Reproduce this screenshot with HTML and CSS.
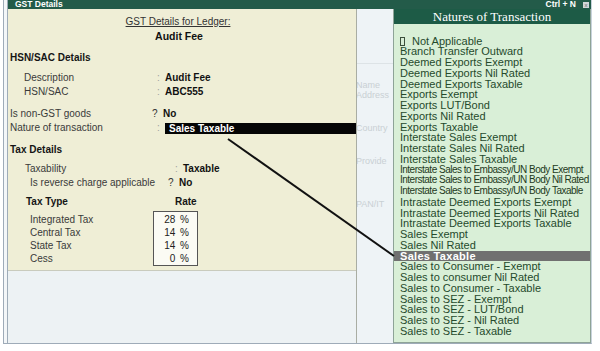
FILE: index.html
```html
<!DOCTYPE html>
<html>
<head>
<meta charset="utf-8">
<title>GST Details</title>
<link rel="stylesheet" href="styles.css">
</head>
<body>
<div class="frame">
  <div class="inner">
    <div class="titlebar">
      <span class="tb-title">GST Details</span>
      <span class="tb-right"><span class="shortcut">Ctrl + N</span><span class="closebox">x</span></span>
    </div>
    <div class="main">
      <div class="leftcol">
        <div class="ledger">
          <div class="title">GST Details for Ledger:</div>
          <div class="subject">Audit Fee</div>

          <div class="heading">HSN/SAC Details</div>
          <div class="row row-desc"><span class="lbl w-desc">Description</span><span class="colon">:</span><span class="val">Audit Fee</span></div>
          <div class="row row-desc2"><span class="lbl w-desc">HSN/SAC</span><span class="colon">:</span><span class="val">ABC555</span></div>

          <div class="row row-nongst"><span class="lbl w-nongst">Is non-GST goods</span><span class="q">?</span><span class="val">No</span></div>
          <div class="row row-nature"><span class="lbl w-nature">Nature of transaction</span><span class="colon">:</span><span class="selbar">Sales Taxable</span></div>

          <div class="heading heading-tax">Tax Details</div>
          <div class="row row-taxability"><span class="lbl w-taxability">Taxability</span><span class="colon">:</span><span class="val">Taxable</span></div>
          <div class="row row-reverse"><span class="lbl w-reverse">Is reverse charge applicable</span><span class="q">?</span><span class="val">No</span></div>

          <div class="row row-taxhead"><span class="th w-taxhead">Tax Type</span><span class="th">Rate</span></div>
          <div class="taxtable">
            <div class="taxlabels">
              <div class="trow">Integrated Tax</div>
              <div class="trow">Central Tax</div>
              <div class="trow">State Tax</div>
              <div class="trow">Cess</div>
            </div>
            <div class="ratebox">
              <div class="trow rate">28 %</div>
              <div class="trow rate">14 %</div>
              <div class="trow rate">14 %</div>
              <div class="trow rate">0 %</div>
            </div>
          </div>
        </div>
        <div class="lower"></div>
      </div>

      <div class="midcol">
        <div class="mid-top"></div>
        <div class="ghost g-name">Name</div>
        <div class="ghost">Address</div>
        <div class="ghost g-country">Country</div>
        <div class="ghost g-provide">Provide</div>
        <div class="ghost g-pan">PAN/IT</div>
      </div>

      <div class="nature">
        <div class="nature-head">Natures of Transaction</div>
        <ul class="nlist">
          <li><span class="na-box"></span>Not Applicable</li>
          <li>Branch Transfer Outward</li>
          <li>Deemed Exports Exempt</li>
          <li>Deemed Exports Nil Rated</li>
          <li>Deemed Exports Taxable</li>
          <li>Exports Exempt</li>
          <li>Exports LUT/Bond</li>
          <li>Exports Nil Rated</li>
          <li>Exports Taxable</li>
          <li>Interstate Sales Exempt</li>
          <li>Interstate Sales Nil Rated</li>
          <li>Interstate Sales Taxable</li>
          <li class="narrow">Interstate Sales to Embassy/UN Body Exempt</li>
          <li class="narrow">Interstate Sales to Embassy/UN Body Nil Rated</li>
          <li class="narrow">Interstate Sales to Embassy/UN Body Taxable</li>
          <li>Intrastate Deemed Exports Exempt</li>
          <li>Intrastate Deemed Exports Nil Rated</li>
          <li>Intrastate Deemed Exports Taxable</li>
          <li>Sales Exempt</li>
          <li>Sales Nil Rated</li>
          <li class="selected">Sales Taxable</li>
          <li>Sales to Consumer - Exempt</li>
          <li>Sales to consumer Nil Rated</li>
          <li>Sales to Consumer - Taxable</li>
          <li>Sales to SEZ - Exempt</li>
          <li>Sales to SEZ - LUT/Bond</li>
          <li>Sales to SEZ - Nil Rated</li>
          <li>Sales to SEZ - Taxable</li>
        </ul>
      </div>
    </div>
  </div>
</div>
<svg class="pointer" width="600" height="351" viewBox="0 0 600 351">
  <line x1="228" y1="139" x2="394" y2="256" stroke="#111" stroke-width="2"/>
</svg>
</body>
</html>
```
FILE: styles.css
```css
html, body {
  margin: 0;
  padding: 0;
}
body {
  width: 600px;
  height: 351px;
  overflow: hidden;
  background: #ffffff;
  font-family: "Liberation Sans", Arial, sans-serif;
  position: relative;
}
.frame {
  margin-left: 3px;
  width: 589px;
  height: 344px;
  box-sizing: border-box;
  border-left: 1px solid #9eabb8;
  border-bottom: 1px solid #9eabb8;
  border-right: 1px solid #c8d3dc;
  padding-left: 3px;
  background: #f3f6f8;
  display: flex;
}
.inner {
  flex: 1;
  border-left: 1px solid #9eabb8;
  display: flex;
  flex-direction: column;
  min-width: 0;
}
.titlebar {
  height: 9px;
  background: #235b49;
  color: #fff;
  display: flex;
  align-items: center;
  justify-content: space-between;
  padding: 0 0 0 7px;
  font-weight: bold;
  font-size: 8.5px;
  line-height: 9px;
}
.tb-right {
  display: flex;
  align-items: center;
  gap: 7px;
  padding-right: 2px;
}
.shortcut {
  font-size: 8.5px;
}
.closebox {
  width: 6px;
  height: 6px;
  background: #d2d6d8;
  color: #666;
  font-size: 6px;
  line-height: 6px;
  text-align: center;
  font-weight: normal;
}
.main {
  flex: 1;
  display: flex;
  min-height: 0;
}
.leftcol {
  width: 349px;
  display: flex;
  flex-direction: column;
  border-right: 1px solid #a9ada3;
  box-sizing: border-box;
}
.ledger {
  height: 262px;
  box-sizing: border-box;
  background: #efeed6;
  border-bottom: 1px solid #c9cbbd;
  padding-top: 6px;
  color: #3a3a3a;
  font-size: 10px;
}
.lower {
  flex: 1;
  background: #edf2f4;
}
.title {
  text-align: center;
  line-height: 14px;
  text-decoration: underline;
  padding-right: 8px;
  color: #333;
}
.subject {
  text-align: center;
  font-weight: bold;
  font-size: 10.5px;
  line-height: 14px;
  padding-right: 6px;
  color: #111;
}
.heading {
  margin-top: 8px;
  padding-left: 2px;
  font-weight: bold;
  line-height: 14px;
  color: #151515;
}
.heading-tax {
  margin-top: 8px;
}
.row {
  display: flex;
  align-items: center;
  height: 14px;
  line-height: 14px;
  white-space: nowrap;
}
.lbl {
  flex: none;
  color: #3a3a3a;
}
.colon {
  color: #a0a0a0;
  width: 8px;
  flex: none;
}
.q {
  color: #333;
  width: 11px;
  flex: none;
}
.val {
  font-weight: bold;
  color: #111;
}
.row-desc { margin-top: 6px; padding-left: 16px; }
.row-desc2 { padding-left: 16px; }
.w-desc { width: 133px; }
.row-nongst { margin-top: 8px; padding-left: 2px; }
.w-nongst { width: 142px; }
.row-nature { padding-left: 2px; }
.w-nature { width: 147px; }
.selbar {
  width: 191px;
  height: 11px;
  line-height: 11px;
  background: #050505;
  color: #fff;
  font-weight: bold;
  padding-left: 4px;
  box-sizing: border-box;
}
.row-taxability { margin-top: 5px; padding-left: 17px; }
.w-taxability { width: 150px; }
.row-reverse { padding-left: 22px; }
.w-reverse { width: 138px; }
.row-taxhead { margin-top: 5px; padding-left: 18px; }
.th {
  font-weight: bold;
  color: #151515;
}
.w-taxhead { width: 149px; }
.taxtable {
  display: flex;
  margin-top: 2px;
}
.taxlabels {
  width: 145px;
  padding-left: 22px;
  padding-top: 2px;
  box-sizing: border-box;
}
.trow {
  height: 13px;
  line-height: 13px;
  color: #3a3a3a;
}
.ratebox {
  width: 45px;
  box-sizing: border-box;
  border: 1px solid #555;
  background: #fbfbf4;
  padding: 1px 8px 0 0;
  height: 55px;
}
.rate {
  text-align: right;
  color: #222;
  word-spacing: 2px;
}
.midcol {
  width: 36px;
  background: #eef3f6;
  overflow: hidden;
  color: #c9d0d4;
  font-size: 9px;
  white-space: nowrap;
}
.mid-top {
  height: 54px;
  border-bottom: 1px solid #dde3e6;
}
.ghost {
  line-height: 10px;
  margin-left: -1px;
}
.g-name { margin-top: 16px; }
.g-country { margin-top: 23px; }
.g-provide { margin-top: 23px; }
.g-pan { margin-top: 33px; }
.nature {
  width: 198px;
  box-sizing: border-box;
  border: 1px solid #8ea397;
  border-top: none;
  background: #d9efd7;
  display: flex;
  flex-direction: column;
  overflow: hidden;
}
.nature-head {
  height: 15px;
  background: #1d5b46;
  color: #fff;
  font-family: "Liberation Serif", "Times New Roman", serif;
  font-size: 13px;
  line-height: 15px;
  text-align: center;
}
.nlist {
  list-style: none;
  margin: 0;
  padding: 11.5px 0 0 0;
  font-size: 11px;
  color: #254a2c;
}
.nlist li {
  height: 10.75px;
  line-height: 10.75px;
  padding-left: 6px;
  white-space: nowrap;
}
.na-box {
  display: inline-block;
  width: 3px;
  height: 7px;
  border: 1px solid #3c4f3c;
  margin-right: 7px;
  vertical-align: -1px;
}
.nlist li.narrow {
  font-size: 10px;
  letter-spacing: -0.5px;
  color: #1e3a22;
}
.nlist li.selected {
  background: #707070;
  color: #fff;
  font-weight: bold;
  letter-spacing: 0.3px;
}
.pointer {
  position: absolute;
  left: 0;
  top: 0;
  pointer-events: none;
}
```
